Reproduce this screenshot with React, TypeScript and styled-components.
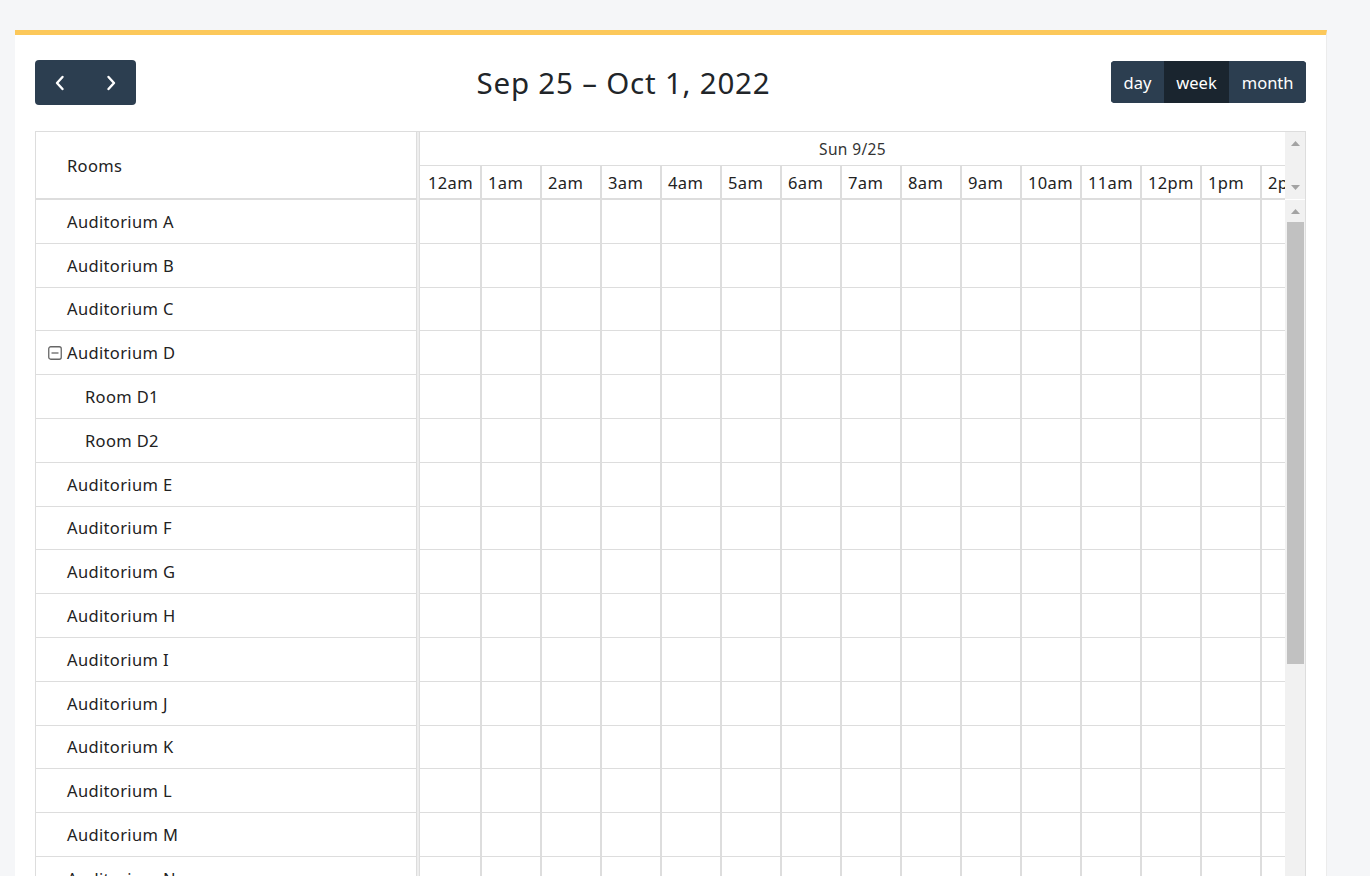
import styled, { createGlobalStyle } from "styled-components";

const GlobalStyle = createGlobalStyle`
  html, body {
    margin: 0;
    padding: 0;
    height: 100%;
    overflow: hidden;
    background: #f5f6f8;
    font-family: "Noto Sans", "Open Sans", sans-serif;
  }
  * { box-sizing: border-box; }
`;

interface Resource {
  title: string;
  depth: number;
  expander?: boolean;
}

const resources: Resource[] = [
  { title: "Auditorium A", depth: 0 },
  { title: "Auditorium B", depth: 0 },
  { title: "Auditorium C", depth: 0 },
  { title: "Auditorium D", depth: 0, expander: true },
  { title: "Room D1", depth: 1 },
  { title: "Room D2", depth: 1 },
  { title: "Auditorium E", depth: 0 },
  { title: "Auditorium F", depth: 0 },
  { title: "Auditorium G", depth: 0 },
  { title: "Auditorium H", depth: 0 },
  { title: "Auditorium I", depth: 0 },
  { title: "Auditorium J", depth: 0 },
  { title: "Auditorium K", depth: 0 },
  { title: "Auditorium L", depth: 0 },
  { title: "Auditorium M", depth: 0 },
  { title: "Auditorium N", depth: 0 },
  { title: "Auditorium O", depth: 0 },
];

const slots = [
  "12am", "1am", "2am", "3am", "4am", "5am", "6am", "7am",
  "8am", "9am", "10am", "11am", "12pm", "1pm", "2pm",
];

const views = ["day", "week", "month"];

function Chevron({ dir }: { dir: "left" | "right" }) {
  return (
    <svg width="10" height="16" viewBox="0 0 10 16">
      <polyline
        points={dir === "left" ? "7.5,2 2,8 7.5,14" : "2.5,2 8,8 2.5,14"}
        fill="none"
        stroke="#fff"
        strokeWidth="2.4"
        strokeLinecap="round"
        strokeLinejoin="round"
      />
    </svg>
  );
}

function Arrow({ up }: { up: boolean }) {
  return (
    <svg width="9" height="5" viewBox="0 0 9 5">
      <polygon points={up ? "0,5 4.5,0 9,5" : "0,0 9,0 4.5,5"} fill="#a3a3a3" />
    </svg>
  );
}

function CollapseIcon() {
  return (
    <svg width="14" height="14" viewBox="0 0 14 14">
      <rect x="0.75" y="0.75" width="12.5" height="12.5" rx="2" fill="none" stroke="#666" strokeWidth="1.3" />
      <line x1="3.5" y1="7" x2="10.5" y2="7" stroke="#666" strokeWidth="1.3" />
    </svg>
  );
}

export default function App() {
  return (
    <>
      <GlobalStyle />
      <Page>
        <Card>
          <Toolbar>
            <ButtonGroup>
              <NavButton aria-label="prev">
                <Chevron dir="left" />
              </NavButton>
              <NavButton aria-label="next">
                <Chevron dir="right" />
              </NavButton>
            </ButtonGroup>
            <Title>Sep 25 – Oct 1, 2022</Title>
            <ViewGroup>
              {views.map((v) => (
                <ViewButton key={v} $active={v === "week"}>
                  {v}
                </ViewButton>
              ))}
            </ViewGroup>
          </Toolbar>

          <Grid>
            <ResourceHeader>Rooms</ResourceHeader>
            <Divider />
            <TimeHeader>
              <DayRow>Sun 9/25</DayRow>
              <SlotRow>
                {slots.map((s, i) => (
                  <SlotLabel key={s} $first={i === 0}>
                    {s}
                  </SlotLabel>
                ))}
              </SlotRow>
            </TimeHeader>
            <HeaderScroll>
              <Arrow up />
              <Arrow up={false} />
            </HeaderScroll>

            <ResourceBody>
              {resources.map((r) => (
                <ResourceRow key={r.title} $depth={r.depth}>
                  {r.expander && (
                    <Expander>
                      <CollapseIcon />
                    </Expander>
                  )}
                  {r.title}
                </ResourceRow>
              ))}
            </ResourceBody>
            <Divider />
            <LaneBody>
              {resources.map((r) => (
                <Lane key={r.title}>
                  {slots.map((s, i) => (
                    <LaneCell key={s} $first={i === 0} />
                  ))}
                </Lane>
              ))}
            </LaneBody>
            <BodyScroll>
              <ArrowBox>
                <Arrow up />
              </ArrowBox>
              <Thumb />
            </BodyScroll>
          </Grid>
        </Card>
      </Page>
    </>
  );
}

const Page = styled.div`
  padding: 30px 43px 0 15px;
  height: 876px;
  overflow: hidden;
`;

const Card = styled.div`
  background: #fff;
  border-top: 5px solid #fcc85a;
  border-right: 1px solid #ececec;
  padding: 25px 20px 0 20px;
  height: 900px;
`;

const Toolbar = styled.div`
  display: flex;
  justify-content: space-between;
  align-items: center;
  height: 45px;
  margin-bottom: 26px;
`;

const ButtonGroup = styled.div`
  display: flex;
  width: 101px;
  height: 45px;
  border-radius: 4px;
  overflow: hidden;
  background: #2c3e50;
`;

const NavButton = styled.button`
  flex: 1;
  border: none;
  background: transparent;
  display: flex;
  align-items: center;
  justify-content: center;
  padding: 0;
  cursor: pointer;
`;

const Title = styled.h2`
  margin: 0;
  font-size: 29.5px;
  font-weight: 400;
  color: #212529;
  letter-spacing: 0.8px;
`;

const ViewGroup = styled.div`
  display: flex;
  height: 42px;
  border-radius: 4px;
  overflow: hidden;
  background: #2c3e50;
  margin-top: -1px;
`;

const ViewButton = styled.button<{ $active?: boolean }>`
  border: none;
  border-left: 1px solid ${(p) => (p.$active ? "#1a252f" : "#2c3e50")};
  border-right: 1px solid ${(p) => (p.$active ? "#1a252f" : "#2c3e50")};
  background: ${(p) => (p.$active ? "#1a252f" : "#2c3e50")};
  color: #fff;
  font-family: inherit;
  font-size: 16.5px;
  padding: 0 11.5px;
  cursor: pointer;
`;

const Grid = styled.div`
  display: grid;
  grid-template-columns: 380px 4px 1fr 20px;
  grid-template-rows: 68px 700px;
  border: 1px solid #ddd;
  border-bottom: none;
  color: #222;
  font-size: 16.5px;
  letter-spacing: 0.35px;
`;

const ResourceHeader = styled.div`
  display: flex;
  align-items: center;
  padding-left: 31px;
  border-bottom: 2px solid #ddd;
`;

const Divider = styled.div`
  border-left: 1px solid #ddd;
  border-right: 1px solid #ddd;
  background: #eee;
`;

const TimeHeader = styled.div`
  display: flex;
  flex-direction: column;
  border-bottom: 2px solid #ddd;
  overflow: hidden;
`;

const DayRow = styled.div`
  height: 34px;
  border-bottom: 1px solid #ddd;
  display: flex;
  align-items: center;
  justify-content: center;
  font-size: 15.5px;
  color: #333;
`;

const SlotRow = styled.div`
  display: flex;
  flex: 1;
  white-space: nowrap;
`;

const SlotLabel = styled.div<{ $first?: boolean }>`
  flex: 0 0 60px;
  display: flex;
  align-items: center;
  padding-left: ${(p) => (p.$first ? 8 : 6)}px;
  border-left: ${(p) => (p.$first ? "none" : "2px solid #ddd")};
  overflow: hidden;
`;

const HeaderScroll = styled.div`
  background: #f1f1f1;
  display: flex;
  flex-direction: column;
  justify-content: space-between;
  align-items: center;
  padding: 9px 0 9px 1px;
  border-bottom: 1px solid #fff;
`;

const ResourceBody = styled.div`
  overflow: hidden;
`;

const ResourceRow = styled.div<{ $depth: number }>`
  height: 43.8px;
  border-bottom: 1px solid #ddd;
  display: flex;
  align-items: center;
  padding-left: ${(p) => 31 + p.$depth * 18}px;
  position: relative;
  white-space: nowrap;
`;

const Expander = styled.span`
  position: absolute;
  left: 12px;
  top: 50%;
  transform: translateY(-50%);
  display: flex;
`;

const LaneBody = styled.div`
  overflow: hidden;
`;

const Lane = styled.div`
  display: flex;
  height: 43.8px;
  border-bottom: 1px solid #ddd;
`;

const LaneCell = styled.div<{ $first?: boolean }>`
  flex: 0 0 60px;
  border-left: ${(p) => (p.$first ? "none" : "2px solid #ddd")};
`;

const BodyScroll = styled.div`
  background: #f1f1f1;
  display: flex;
  flex-direction: column;
  align-items: center;
  padding-left: 1px;
`;

const ArrowBox = styled.div`
  height: 22px;
  display: flex;
  align-items: center;
  justify-content: center;
`;

const Thumb = styled.div`
  width: 17px;
  height: 442px;
  background: #c1c1c1;
`;
